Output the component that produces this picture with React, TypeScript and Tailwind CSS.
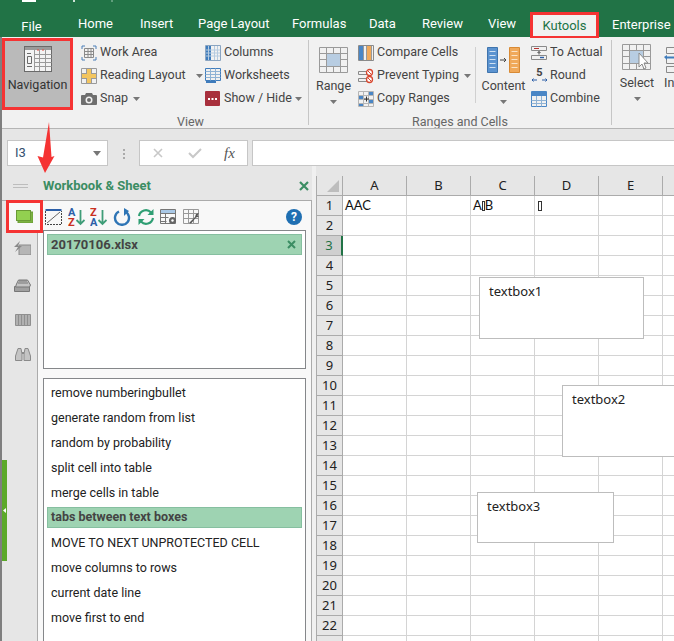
const tabs = [
  { label: 'Home', cls: 'w-[33px]' },
  { label: 'Insert', cls: 'w-[29px]' },
  { label: 'Page Layout', cls: 'w-[65px]' },
  { label: 'Formulas', cls: 'w-[48px]' },
  { label: 'Data', cls: 'w-[24px]' },
  { label: 'Review', cls: 'w-[37px]' },
  { label: 'View', cls: 'w-[25px]' },
];

const macros = [
  'remove numberingbullet',
  'generate random from list',
  'random by probability',
  'split cell into table',
  'merge cells in table',
  'tabs between text boxes',
  'MOVE TO NEXT UNPROTECTED CELL',
  'move columns to rows',
  'current date line',
  'move first to end',
];

const columns = ['A', 'B', 'C', 'D', 'E', ''];
const rows = Array.from({ length: 23 }, (_, i) => i + 1);

function Caret({ className = '' }: { className?: string }) {
  return (
    <svg width="7" height="4" viewBox="0 0 7 4" className={className}>
      <path d="M0 0h7L3.5 4z" fill="#777" />
    </svg>
  );
}

function WorkAreaIcon() {
  return (
    <svg width="16" height="16" viewBox="0 0 16 16" fill="none">
      <path d="M1 4V1h3M12 1h3v3M15 12v3h-3M4 15H1v-3" stroke="#4a7fb8" />
      <path d="M3.5 3.5h9v9h-9zM3.5 6.5h9M3.5 9.5h9M7 3.5v9M10 3.5v9" stroke="#8a8a8a" />
    </svg>
  );
}

function ReadingIcon() {
  return (
    <svg width="16" height="16" viewBox="0 0 16 16" fill="none">
      <path d="M.5.5h15v15H.5zM.5 5.5h15M.5 10.5h15M5.5.5v15M10.5.5v15" stroke="#9a9a9a" />
      <path d="M6 1h4v14H6zM1 6h14v4H1z" fill="#f3c55f" />
    </svg>
  );
}

function SnapIcon() {
  return (
    <svg width="16" height="14" viewBox="0 0 16 14">
      <path d="M1 3h3l1-2h6l1 2h3a1 1 0 0 1 1 1v8a1 1 0 0 1-1 1H1a1 1 0 0 1-1-1V4a1 1 0 0 1 1-1z" fill="#6e6e6e" />
      <circle cx="8" cy="8" r="3.5" fill="#f1f1f1" />
      <circle cx="8" cy="8" r="2" fill="#6e6e6e" />
    </svg>
  );
}

function ColumnsIcon() {
  return (
    <svg width="16" height="16" viewBox="0 0 16 16" fill="none">
      <path d="M.5.5h15v15H.5z" stroke="#8aa5c2" />
      <path d="M1 1h5v14H1z" fill="#3f7cbc" />
      <path d="M3.5 1v14M9.5 1v14M12.5 1v14M1 5h14M1 8h14M1 11h14" stroke="#b5cbe0" />
    </svg>
  );
}

function WorksheetsIcon() {
  return (
    <svg width="16" height="16" viewBox="0 0 16 16" fill="none">
      <path d="M.5.5h15v12H.5z" stroke="#3f7cbc" />
      <path d="M.5 3.5h15M.5 6.5h15M.5 9.5h15M5.5.5v12M10.5.5v12" stroke="#8fb2d4" />
      <path d="M1 13h10v2H1z" fill="#3f7cbc" />
    </svg>
  );
}

function ShowHideIcon() {
  return (
    <svg width="15" height="15" viewBox="0 0 15 15">
      <rect width="15" height="15" rx="1" fill="#a8303d" />
      <path d="M3 7h2v2H3zM6.5 7h2v2h-2zM10 7h2v2h-2z" fill="#fff" />
    </svg>
  );
}

function RangeIcon({ select = false }: { select?: boolean }) {
  return (
    <svg width="30" height="26" viewBox="0 0 30 26" fill="none">
      <path d="M.5.5h28v25H.5zM.5 6.5h28M.5 12.5h28M.5 19.5h28M7.5.5v25M14.5.5v25M21.5.5v25" stroke="#9a9a9a" />
      <path d="M8 7h13v12H8z" fill="#b8cde2" />
      {select && <path d="M17 9l0 14 3-3 2 5 2-1-2-5 4 0z" fill="#fff" stroke="#8a8a8a" />}
    </svg>
  );
}

function CompareIcon() {
  return (
    <svg width="16" height="16" viewBox="0 0 16 16" fill="none">
      <path d="M.5.5h15v15H.5z" stroke="#8a8a8a" />
      <path d="M1 1h4v14H1z" fill="#4a86c5" />
      <path d="M9 1h4v14H9z" fill="#f0a95a" />
      <path d="M5.5 1v14M8.5 1v14M13.5 1v14" stroke="#9a9a9a" />
    </svg>
  );
}

function PreventIcon() {
  return (
    <svg width="16" height="16" viewBox="0 0 16 16" fill="none">
      <path d="M.5 3.5h10v3H.5zM.5 10.5h10v3H.5z" stroke="#8a8a8a" />
      <circle cx="11.5" cy="4.5" r="3" fill="#fff" stroke="#d8472f" strokeWidth="1.3" />
      <circle cx="11.5" cy="11.5" r="3" fill="#fff" stroke="#d8472f" strokeWidth="1.3" />
      <path d="M9.5 2.5l4 4M9.5 9.5l4 4" stroke="#d8472f" />
    </svg>
  );
}

function CopyRangesIcon() {
  return (
    <svg width="16" height="16" viewBox="0 0 16 16" fill="none">
      <path d="M.5.5h15v15H.5zM.5 4.5h15M.5 8.5h15M.5 12.5h15M5.5.5v15M10.5.5v15" stroke="#b5b5b5" />
      <path d="M1 5h4v3H1zM1 13h4v2H1zM11 1h4v3h-4zM11 9h4v3h-4z" fill="#4a86c5" />
      <path d="M6 8h5M8.5 5.5v5" stroke="#333" />
    </svg>
  );
}

function ContentIcon() {
  return (
    <svg width="33" height="26" viewBox="0 0 33 26" fill="none">
      <path d="M.5.5h10v25H.5z" fill="#5b93d0" stroke="#3f74ad" />
      <path d="M2.5 4.500h6M2.500 8.500h6M2.500 12.500h6M2.500 16.500h6M2.500 20.500h6" stroke="#cfe0f1" />
      <path d="M22.500.5h10v25h-10z" fill="#f0a95a" stroke="#d88a35" />
      <path d="M24.500 4.500h6M24.500 8.500h6M24.500 12.500h6M24.500 16.500h6M24.500 20.500h6" stroke="#fbe3c5" />
      <path d="M13 13h6M17 11l2 2-2 2" stroke="#444" />
    </svg>
  );
}

function ToActualIcon() {
  return (
    <svg width="16" height="16" viewBox="0 0 16 16" fill="none">
      <path d="M.5 1.500h15v4H.5zM.5 10.500h15v4H.5z" stroke="#8a8a8a" />
      <path d="M3 3.500h5" stroke="#b8312f" />
      <path d="M9 12.500h4" stroke="#2c5fa8" strokeWidth="1.400" />
      <path d="M8 6.500v3M6.500 8L8 6.500 9.500 8" stroke="#444" />
    </svg>
  );
}

function RoundIcon() {
  return (
    <svg width="17" height="18" viewBox="0 0 17 18" fill="none">
      <text x="8.500" y="9" textAnchor="middle" fontSize="11" fontWeight="700" fill="#444" fontFamily="Roboto">5</text>
      <path d="M1 13h5M2.500 11.500L1 13l1.500 1.500M11 13h5M14.500 11.500L16 13l-1.500 1.500" stroke="#2c5fa8" />
    </svg>
  );
}

function CombineIcon() {
  return (
    <svg width="16" height="16" viewBox="0 0 16 16" fill="none">
      <path d="M.5.500h15v15H.5z" stroke="#4a86c5" />
      <path d="M1 1h14v4H1z" fill="#4a86c5" />
      <path d="M.5 9.500h15M.5 12.500h15M5.500 5v10.500M10.500 5v10.500" stroke="#8fb2d4" />
    </svg>
  );
}

function NavigationIcon() {
  return (
    <svg width="28" height="26" viewBox="0 0 28 26" fill="none">
      <rect x=".5" y=".5" width="27" height="25" fill="#f3f3f3" stroke="#6a6a6a" />
      <path d="M1 1h26v3H1z" fill="#9a9a9a" />
      <path d="M13 4h2M18 4h2" stroke="#e04a3f" />
      <path d="M10.500 4v21M10.500 8.500h17M10.500 12.500h17M10.500 16.500h17M10.500 20.500h17M15.500 4v21M21.500 4v21" stroke="#9a9a9a" />
      <path d="M3.500 10.500h4v7h-4zM3 20.500h5M3 7.500h4" stroke="#6a6a6a" />
    </svg>
  );
}

function RibbonItem({ icon, label, caretClass }: { icon: React.ReactNode; label: string; caretClass?: string }) {
  return (
    <div className="flex items-center h-[23px]">
      <div className="w-[19px] flex items-center shrink-0">{icon}</div>
      <span className="whitespace-nowrap">{label}</span>
      {caretClass && <Caret className={caretClass} />}
    </div>
  );
}

function BigButton({ icon, label, className = '' }: { icon: React.ReactNode; label: string; className?: string }) {
  return (
    <div className={`flex flex-col items-center shrink-0 ${className}`}>
      <div className="h-[33px] flex items-end">{icon}</div>
      <span className="h-[26px] leading-[26px] whitespace-nowrap">{label}</span>
      <Caret className="mt-[1px]" />
    </div>
  );
}

function Group({ label, className, children }: { label: string; className: string; children: React.ReactNode }) {
  return (
    <div className={`flex flex-col shrink-0 border-r border-[#c6c6c6] my-[3px] ${className}`}>
      <div className="h-[75px] shrink-0 flex">{children}</div>
      <div className="shrink-0 text-center text-[#666] leading-[16px] -mt-[1px]">{label}</div>
    </div>
  );
}

function Ribbon() {
  return (
    <div className="flex h-[92px] bg-[#f1f1f1] border-b border-[#b5b5b5] text-[12.500px] text-[#444] overflow-hidden">
      <div className="w-[71px] h-[72px] mt-[1px] shrink-0 border-[3px] border-[#f53333] bg-[#bababa] flex flex-col items-center">
        <div className="mt-[5px]"><NavigationIcon /></div>
        <span className="mt-[4px] text-[#333]">Navigation</span>
      </div>
      <Group label="View" className="w-[236px]">
        <div className="pl-[8px] pt-[1px] w-[132px]">
          <RibbonItem icon={<WorkAreaIcon />} label="Work Area" />
          <RibbonItem icon={<ReadingIcon />} label="Reading Layout" caretClass="ml-[10px]" />
          <RibbonItem icon={<SnapIcon />} label="Snap" caretClass="ml-[5px]" />
        </div>
        <div className="pt-[1px]">
          <RibbonItem icon={<ColumnsIcon />} label="Columns" />
          <RibbonItem icon={<WorksheetsIcon />} label="Worksheets" />
          <RibbonItem icon={<ShowHideIcon />} label="Show / Hide" caretClass="ml-[3px]" />
        </div>
      </Group>
      <Group label="Ranges and Cells" className="w-[303px]">
        <BigButton icon={<RangeIcon />} label="Range" className="w-[49px]" />
        <div className="w-[117px] pt-[1px]">
          <RibbonItem icon={<CompareIcon />} label="Compare Cells" />
          <RibbonItem icon={<PreventIcon />} label="Prevent Typing" caretClass="ml-[5px]" />
          <RibbonItem icon={<CopyRangesIcon />} label="Copy Ranges" />
        </div>
        <div className="w-px h-[56px] mt-[7px] bg-[#d0d0d0] shrink-0" />
        <BigButton icon={<ContentIcon />} label="Content" className="w-[55px]" />
        <div className="pt-[1px]">
          <RibbonItem icon={<ToActualIcon />} label="To Actual" />
          <RibbonItem icon={<RoundIcon />} label="Round" />
          <RibbonItem icon={<CombineIcon />} label="Combine" />
        </div>
      </Group>
      <div className="flex">
        <BigButton icon={<RangeIcon select />} label="Select" className="w-[50px]" />
        <div className="ml-[2px] mt-[3px] flex flex-col">
          <div className="h-[33px] flex items-end">
            <svg width="14" height="26" viewBox="0 0 14 26" fill="none">
              <path d="M2.500.5h12v6h-12zM2.500 19.500h12v6h-12zM2.500 10.500h12v6h-12z" stroke="#8a8a8a" />
              <path d="M0 10l3-2v1.500h8v2H3V13z" fill="#3f7cbc" />
            </svg>
          </div>
          <span className="h-[26px] leading-[26px] -mt-[3px] whitespace-nowrap">In</span>
        </div>
      </div>
    </div>
  );
}

function FormulaBar() {
  return (
    <div className="flex h-[38px] pt-[11px] pl-[5px] text-[13px] text-[#444]">
      <div className="w-[101px] h-[26px] bg-white border border-[#c6c6c6] flex items-center justify-between pl-[7px] pr-[6px]">
        <span className="text-[#34506e]">I3</span>
        <svg width="8" height="5" viewBox="0 0 8 5"><path d="M0 0h8L4 5z" fill="#777" /></svg>
      </div>
      <div className="w-[31px] flex flex-col items-center justify-center gap-[2px]">
        <i className="w-[2px] h-[2px] bg-[#aaa]" />
        <i className="w-[2px] h-[2px] bg-[#aaa]" />
        <i className="w-[2px] h-[2px] bg-[#aaa]" />
      </div>
      <div className="w-[109px] h-[26px] bg-white border border-[#c6c6c6] flex items-center pl-[12px]">
        <svg width="12" height="12" viewBox="0 0 12 12" fill="none"><path d="M2 2l8 8M10 2l-8 8" stroke="#c8c8c8" strokeWidth="1.6" /></svg>
        <svg width="14" height="12" viewBox="0 0 14 12" fill="none" className="ml-[24px]"><path d="M1 6l4 4 8-8" stroke="#c8c8c8" strokeWidth="2" /></svg>
        <span className="ml-[22px] font-['Liberation_Serif',serif] italic text-[#555] text-[15px]">fx</span>
      </div>
      <div className="ml-[4px] flex-1 h-[26px] bg-white border border-[#c6c6c6] border-r-0" />
    </div>
  );
}

function SideTab({ className = '', children }: { className?: string; children: React.ReactNode }) {
  return <div className={`h-[35px] flex items-center justify-center w-[37px] ${className}`}>{children}</div>;
}

function Sidebar() {
  return (
    <div className="relative w-[36px] shrink-0 border-r border-[#ababab] flex flex-col">
      <div className="h-[33px] w-[37px] ml-[4px] -mt-[1px] border-[3px] border-[#f53333] bg-[#f8f8f8] flex items-center justify-center relative z-10">
        <svg width="17" height="13" viewBox="0 0 17 13">
          <rect x="2" y="2" width="15" height="11" fill="#7cb342" stroke="#6a9a35" />
          <rect x=".5" y=".5" width="14" height="10" fill="#92d050" stroke="#6a9a35" />
        </svg>
      </div>
      <div className="pl-[2px] -mt-[3px] flex flex-col">
        <SideTab>
          <svg width="17" height="14" viewBox="0 0 17 14" fill="none">
            <path d="M5 4h12v10H5z" fill="#b5b5b5" stroke="#8a8a8a" />
            <path d="M6 0L0 6h4l-3 5 7-6H4z" fill="#8a8a8a" />
          </svg>
        </SideTab>
        <SideTab className="mt-[2px]">
          <svg width="17" height="14" viewBox="0 0 17 14" fill="none">
            <path d="M.5 8.500h15v5H.5z" fill="#a0a0a0" stroke="#777" />
            <path d="M2.500 6l2-4h9l3 5-1 2H1.500z" fill="#c4c4c4" stroke="#777" />
            <path d="M4 5h10M5 3h8" stroke="#777" />
          </svg>
        </SideTab>
        <SideTab>
          <svg width="16" height="12" viewBox="0 0 16 12" fill="none">
            <path d="M.5.500h15v11H.5zM3.500.500v11M6.500.500v11M9.500.500v11M12.500.500v11" fill="#b0b0b0" stroke="#8f8f8f" />
          </svg>
        </SideTab>
        <SideTab>
          <svg width="16" height="13" viewBox="0 0 16 13" fill="none">
            <path d="M3 .500h3l1 5.500v6.500H.500V8zM13 .500h-3L9 6v6.500h6.500V8z" fill="#c4c4c4" stroke="#8a8a8a" />
            <path d="M7 5h2" stroke="#8a8a8a" strokeWidth="2" />
          </svg>
        </SideTab>
      </div>
      <div className="absolute left-0 top-[259px] w-[5px] h-[101px] bg-[#5ca92a] flex items-center justify-center">
        <svg width="3" height="5" viewBox="0 0 3 5"><path d="M3 0v5L0 2.500z" fill="#fff" /></svg>
      </div>
    </div>
  );
}

function PanelToolbar() {
  return (
    <div className="flex items-center h-[29px] pt-[2px] pl-[7px] pr-[9px]">
      <svg width="17" height="16" viewBox="0 0 17 16" fill="none" className="mr-[6px]">
        <path d="M.5 1h16" stroke="#2c5fa8" strokeWidth="2" />
        <path d="M.5 2v13.500h16V2" stroke="#444" strokeDasharray="2 1" />
        <path d="M2 14L15 3" stroke="#666" />
      </svg>
      {['A', 'Z'].map((first) => (
        <svg key={first} width="17" height="20" viewBox="0 0 17 20" fill="none" className="mr-[5px]">
          <text x="0" y="9" fontSize="11" fontWeight="700" fontFamily="Roboto" fill={first === 'A' ? '#2c5fa8' : '#c9301f'}>{first}</text>
          <text x="0" y="19" fontSize="11" fontWeight="700" fontFamily="Roboto" fill={first === 'A' ? '#c9301f' : '#2c5fa8'}>{first === 'A' ? 'Z' : 'A'}</text>
          <path d="M12.500 3v14M8.500 13l4 4 4-4" stroke="#3f9d78" strokeWidth="1.800" />
        </svg>
      ))}
      <svg width="18" height="18" viewBox="0 0 18 18" fill="none" className="ml-[1px] mr-[6px]">
        <path d="M6 3.500a7 7 0 1 0 6 0" stroke="#2f75b5" strokeWidth="2.400" />
        <path d="M11 0v8l5-5z" fill="#2f75b5" />
      </svg>
      <svg width="18" height="18" viewBox="0 0 18 18" fill="none" className="mr-[5px]">
        <path d="M2 8a7 7 0 0 1 12-3.500M16 10a7 7 0 0 1-12 3.500" stroke="#2f9e73" strokeWidth="2.200" />
        <path d="M16.500 1v6h-6zM1.500 17v-6h6z" fill="#2f9e73" />
      </svg>
      <svg width="17" height="16" viewBox="0 0 17 16" fill="none" className="mr-[6px]">
        <path d="M1 1h15v3H1z" fill="#a9c8e6" />
        <path d="M.5.500h15v14H.5zM.5 4.500h15M.5 8.500h8M.5 12.500h6M5.500 4.500v10" stroke="#777" />
        <circle cx="12.500" cy="11.500" r="3.500" fill="#666" />
        <circle cx="12.500" cy="11.500" r="1.200" fill="#fff" />
      </svg>
      <svg width="17" height="16" viewBox="0 0 17 16" fill="none">
        <path d="M.5.500h15v14H.5zM.5 4.500h15M.5 9.500h15M5.500.500v14M10.500.500v14" stroke="#999" />
        <path d="M6 14l6-6 1-3 3-1-1.500 2.500 1.500 1-3 1-5 6z" fill="#555" />
      </svg>
      <div className="ml-auto w-[16px] h-[16px] rounded-full bg-[#1f6fb2] text-white text-[12px] font-bold leading-[16px] text-center">?</div>
    </div>
  );
}

function Panel() {
  return (
    <div className="flex-1 bg-[#f8f8f8] px-[5px] flex flex-col">
      <div className="-mx-[5px]"><PanelToolbar /></div>
      <div className="h-[139px] bg-white border border-[#85878a] p-[3px]">
        <div className="h-[21px] bg-[#9ed3b2] border border-[#86bfa0] flex items-center justify-between pl-[3px] pr-[5px] text-[13px] font-bold text-[#444]">
          20170106.xlsx
          <svg width="9" height="9" viewBox="0 0 9 9" fill="none"><path d="M1 1l7 7M8 1L1 8" stroke="#3b8d63" strokeWidth="2" /></svg>
        </div>
      </div>
      <div className="mt-[9px] flex-1 bg-white border border-[#85878a] border-b-0 px-[3px] pt-[2px] text-[12.500px] text-[#222]">
        {macros.map((m) =>
          m === 'tabs between text boxes' ? (
            <div key={m} className="h-[21px] mt-[1px] mb-[3px] bg-[#9ed3b2] border border-[#86bfa0] flex items-center pl-[3px] font-bold text-[#444]">{m}</div>
          ) : (
            <div key={m} className="h-[25px] flex items-center pl-[4px]">{m}</div>
          ),
        )}
      </div>
    </div>
  );
}

function Pane() {
  return (
    <div className="w-[310px] shrink-0 flex flex-col">
      <div className="h-[35px] pt-[6px] flex items-center relative border-b border-[#ababab]">
        <div className="w-[41px] shrink-0 pl-[11px] flex flex-col gap-[2px]">
          <i className="block w-[15px] h-px bg-[#bdbdbd]" />
          <i className="block w-[15px] h-px bg-[#bdbdbd]" />
        </div>
        <span className="text-[13px] font-bold text-[#3b8d63]">Workbook &amp; Sheet</span>
        <svg width="10" height="10" viewBox="0 0 10 10" fill="none" className="ml-auto mr-[3px]"><path d="M1 1l8 8M9 1L1 9" stroke="#3b8d63" strokeWidth="2.200" /></svg>
      </div>
      <div className="flex-1 flex border-r border-[#ababab]">
        <Sidebar />
        <Panel />
      </div>
    </div>
  );
}

function Sheet() {
  return (
    <div className="flex-1 min-w-0 flex overflow-hidden pt-[10px] font-['Noto_Sans',sans-serif]">
      <div className="w-[4px] shrink-0 bg-[#f0f0f0] -mt-[10px]" />
      <div className="border-l border-[#ababab] flex-1">
        <div className="flex h-[20px] bg-[#e6e6e6] border-b border-[#ababab] text-[13px] text-[#222]">
          <div className="w-[26px] shrink-0 border-r border-[#ababab] flex items-end justify-end pr-[3px] pb-[3px]">
            <svg width="12" height="12" viewBox="0 0 12 12"><path d="M12 0v12H0z" fill="#bdbdbd" /></svg>
          </div>
          {columns.map((c, i) => (
            <div key={i} className="w-[64px] shrink-0 border-r border-[#ababab] flex items-center justify-center">{c}</div>
          ))}
        </div>
        {rows.map((r) => (
          <div key={r} className="flex h-[20px] bg-white text-[13px] text-[#222]">
            <div className={`w-[26px] shrink-0 border-b border-[#ababab] flex items-center justify-center pt-[1px] ${r === 3 ? 'bg-[#cfcfcf] text-[#1e7145] border-r-2 border-r-[#217346]' : 'bg-[#e6e6e6] border-r'}`}>{r < 23 && r}</div>
            {columns.map((c, i) => (
              <div key={i} className="w-[64px] shrink-0 border-r border-b border-[#d4d4d4] flex items-center pl-[2px] pt-[1px] font-['Lato',sans-serif] text-[13px] text-[#111]">
                {r === 1 && c === 'A' && 'AAC'}
                {r === 1 && c === 'C' && (
                  <>A<i className="inline-block w-[3px] h-[10px] border border-[#333]" />B</>
                )}
                {r === 1 && c === 'D' && <i className="inline-block w-[4px] h-[10px] ml-[1px] border border-[#333]" />}
              </div>
            ))}
          </div>
        ))}
      </div>
    </div>
  );
}

function TextBox({ text, className }: { text: string; className: string }) {
  return (
    <div className={`absolute bg-white border border-[#bdbdbd] pl-[9px] pt-[4px] font-['Noto_Sans',sans-serif] text-[13px] leading-[18px] text-[#222] ${className}`}>
      {text}
    </div>
  );
}

export default function App() {
  return (
    <div className="relative w-[674px] h-[641px] overflow-hidden bg-[#e6e6e6] font-['Roboto',sans-serif]">
      {/* tab strip */}
      <div className="h-[37px] bg-[#217346] relative z-10 text-white text-[13px]">
        <div className="flex gap-[16px] pl-[22px] h-[2px]">
          <i className="w-[14px] bg-white" />
          <i className="w-[2px] ml-[21px] bg-[#cfe3d7]" />
          <i className="w-[2px] ml-[20px] bg-[#5f9e7c]" />
        </div>
        <div className="flex items-end h-[35px]">
          <span className="w-[62px] text-center pl-[1px] leading-[20px]">File</span>
          <div className="flex items-center gap-[29px] ml-[16px] h-[24px] mb-[1px]">
            {tabs.map((t) => (
              <span key={t.label} className={`${t.cls} text-center whitespace-nowrap`}>{t.label}</span>
            ))}
          </div>
          <div className="w-[69px] h-[26px] ml-[17px] -mb-[1px] border-[3px] border-b-2 border-[#f53333] bg-[#f1f1f1] text-[#217346] flex items-center justify-center">Kutools</div>
          <span className="ml-[13px] h-[25px] leading-[25px] whitespace-nowrap">Enterprise</span>
        </div>
      </div>

      <div className="h-[604px] border-l-2 border-[#7f7f7f] flex flex-col">
        <Ribbon />
        <FormulaBar />
        <div className="flex-1 min-h-0 flex -mt-[1px]">
          <Pane />
          <Sheet />
        </div>
      </div>

      <TextBox text="textbox1" className="left-[479px] top-[277px] w-[165px] h-[62px]" />
      <TextBox text="textbox2" className="left-[562px] top-[385px] w-[120px] h-[72px]" />
      <TextBox text="textbox3" className="left-[477px] top-[492px] w-[137px] h-[51px]" />

      {/* callout arrow from Navigation down to the pane tab */}
      <svg width="20" height="52" viewBox="0 0 20 52" className="absolute left-[36px] top-[122px]">
        <path d="M13 0l2.500 35 3 -1L9 51 1.500 34l5.500 1.500z" fill="#f53333" />
      </svg>
    </div>
  );
}
